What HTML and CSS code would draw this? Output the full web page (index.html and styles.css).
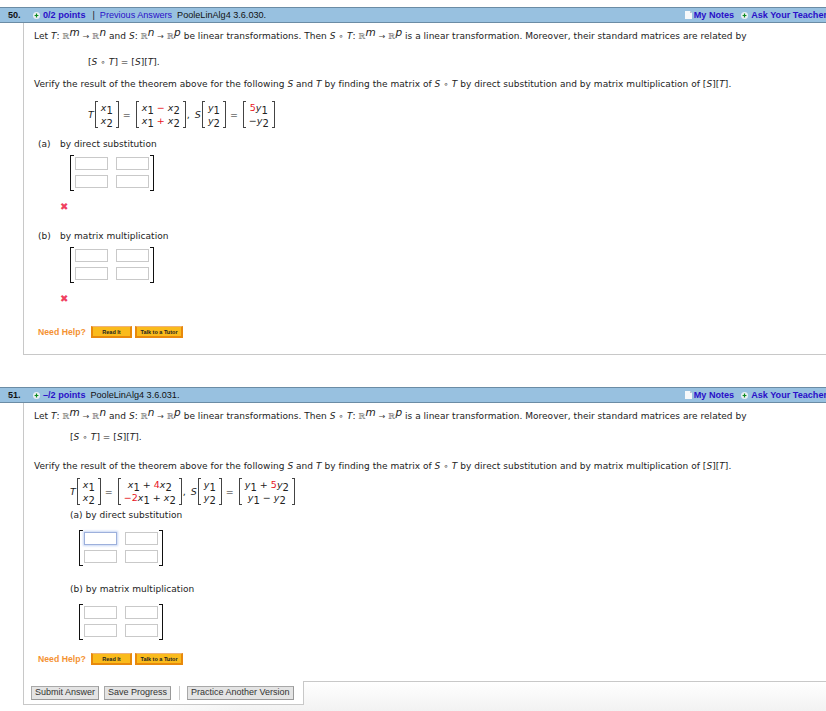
FILE: index.html
```html
<!DOCTYPE html>
<html lang="en">
<head>
<meta charset="utf-8">
<title>Questions</title>
<link rel="stylesheet" href="styles.css">
</head>
<body>
<section class="q q50">
  <header class="qhead">
    <b class="num">50.</b>
    <svg class="plus" viewBox="0 0 7 7"><circle cx="3.5" cy="3.5" r="3.5" fill="#e8eef2"/><path d="M3.5 1.6v3.8M1.6 3.5h3.8" stroke="#0a8a1e" stroke-width="1.2"/></svg>
    <a class="link pts">0/2 points</a>
    <span class="sep">|</span>
    <a class="link prev">Previous Answers</a>
    <span class="code">PooleLinAlg4 3.6.030.</span>
    <span class="tools">
      <svg class="note" viewBox="0 0 7 8"><path d="M0 0h5l2 2v6H0z" fill="#f6f8fa"/><path d="M5 0l2 2H5z" fill="#b8c4cc"/></svg><a class="link">My Notes</a>
      <svg class="plus ask" viewBox="0 0 7 7"><circle cx="3.5" cy="3.5" r="3.5" fill="#e8eef2"/><path d="M3.5 1.6v3.8M1.6 3.5h3.8" stroke="#0a8a1e" stroke-width="1.2"/></svg><a class="link">Ask Your Teacher</a>
    </span>
  </header>
  <div class="body">
    <p class="line l1">Let <i>T</i>: <span class="bb">ℝ</span><sup>m</sup> <span class="arr">→</span> <span class="bb">ℝ</span><sup>n</sup> and <i>S</i>: <span class="bb">ℝ</span><sup>n</sup> <span class="arr">→</span> <span class="bb">ℝ</span><sup>p</sup> be linear transformations. Then <i>S</i> <span class="o">∘</span> <i>T</i>: <span class="bb">ℝ</span><sup>m</sup> <span class="arr">→</span> <span class="bb">ℝ</span><sup>p</sup> is a linear transformation. Moreover, their standard matrices are related by</p>
    <p class="line thm a">[<i>S</i> <span class="o">∘</span> <i>T</i>] = [<i>S</i>][<i>T</i>].</p>
    <p class="line ver a2">Verify the result of the theorem above for the following <i>S</i> and <i>T</i> by finding the matrix of <i>S</i> <span class="o">∘</span> <i>T</i> by direct substitution and by matrix multiplication of [<i>S</i>][<i>T</i>].</p>
    <div class="eq e50">
      <i class="v">T</i>
      <span class="mx"><span class="bl"></span><span class="cells"><span><var>x</var><sub>1</sub></span><span><var>x</var><sub>2</sub></span></span><span class="br"></span></span>
      <span class="eqs">=</span>
      <span class="mx"><span class="bl"></span><span class="cells"><span><var>x</var><sub>1</sub> <em>−</em> <var>x</var><sub>2</sub></span><span><var>x</var><sub>1</sub> <em>+</em> <var>x</var><sub>2</sub></span></span><span class="br"></span></span>
      <span class="comma">,</span>
      <i class="v s">S</i>
      <span class="mx"><span class="bl"></span><span class="cells"><span><var>y</var><sub>1</sub></span><span><var>y</var><sub>2</sub></span></span><span class="br"></span></span>
      <span class="eqs">=</span>
      <span class="mx"><span class="bl"></span><span class="cells"><span><em>5</em><var>y</var><sub>1</sub></span><span>−<var>y</var><sub>2</sub></span></span><span class="br"></span></span>
    </div>
    <p class="line part pa"><span class="tag">(a)</span>by direct substitution</p>
    <div class="grid g50"><span class="bl"></span><span class="inputs"><input><input><input><input></span><span class="br"></span></div>
    <div class="wrong">✖</div>
    <p class="line part pb"><span class="tag">(b)</span>by matrix multiplication</p>
    <div class="grid g50"><span class="bl"></span><span class="inputs"><input><input><input><input></span><span class="br"></span></div>
    <div class="wrong">✖</div>
    <div class="help h50"><span class="need">Need Help?</span><span class="hbtn read">Read It</span><span class="hbtn talk">Talk to a Tutor</span></div>
  </div>
</section>

<section class="q q51">
  <header class="qhead">
    <b class="num">51.</b>
    <svg class="plus" viewBox="0 0 7 7"><circle cx="3.5" cy="3.5" r="3.5" fill="#e8eef2"/><path d="M3.5 1.6v3.8M1.6 3.5h3.8" stroke="#0a8a1e" stroke-width="1.2"/></svg>
    <a class="link pts">–/2 points</a>
    <span class="code c51">PooleLinAlg4 3.6.031.</span>
    <span class="tools">
      <svg class="note" viewBox="0 0 7 8"><path d="M0 0h5l2 2v6H0z" fill="#f6f8fa"/><path d="M5 0l2 2H5z" fill="#b8c4cc"/></svg><a class="link">My Notes</a>
      <svg class="plus ask" viewBox="0 0 7 7"><circle cx="3.5" cy="3.5" r="3.5" fill="#e8eef2"/><path d="M3.5 1.6v3.8M1.6 3.5h3.8" stroke="#0a8a1e" stroke-width="1.2"/></svg><a class="link">Ask Your Teacher</a>
    </span>
  </header>
  <div class="body">
    <p class="line l1">Let <i>T</i>: <span class="bb">ℝ</span><sup>m</sup> <span class="arr">→</span> <span class="bb">ℝ</span><sup>n</sup> and <i>S</i>: <span class="bb">ℝ</span><sup>n</sup> <span class="arr">→</span> <span class="bb">ℝ</span><sup>p</sup> be linear transformations. Then <i>S</i> <span class="o">∘</span> <i>T</i>: <span class="bb">ℝ</span><sup>m</sup> <span class="arr">→</span> <span class="bb">ℝ</span><sup>p</sup> is a linear transformation. Moreover, their standard matrices are related by</p>
    <p class="line thm b">[<i>S</i> <span class="o">∘</span> <i>T</i>] = [<i>S</i>][<i>T</i>].</p>
    <p class="line ver b2">Verify the result of the theorem above for the following <i>S</i> and <i>T</i> by finding the matrix of <i>S</i> <span class="o">∘</span> <i>T</i> by direct substitution and by matrix multiplication of [<i>S</i>][<i>T</i>].</p>
    <div class="eq e51">
      <i class="v">T</i>
      <span class="mx"><span class="bl"></span><span class="cells"><span><var>x</var><sub>1</sub></span><span><var>x</var><sub>2</sub></span></span><span class="br"></span></span>
      <span class="eqs">=</span>
      <span class="mx"><span class="bl"></span><span class="cells"><span><var>x</var><sub>1</sub> + <em>4</em><var>x</var><sub>2</sub></span><span><em>−2</em><var>x</var><sub>1</sub> + <var>x</var><sub>2</sub></span></span><span class="br"></span></span>
      <span class="comma">,</span>
      <i class="v s">S</i>
      <span class="mx"><span class="bl"></span><span class="cells"><span><var>y</var><sub>1</sub></span><span><var>y</var><sub>2</sub></span></span><span class="br"></span></span>
      <span class="eqs">=</span>
      <span class="mx"><span class="bl"></span><span class="cells"><span><var>y</var><sub>1</sub> + <em>5</em><var>y</var><sub>2</sub></span><span><var>y</var><sub>1</sub> − <var>y</var><sub>2</sub></span></span><span class="br"></span></span>
    </div>
    <p class="line part2">(a) by direct substitution</p>
    <div class="grid g51"><span class="bl"></span><span class="inputs"><input class="focus"><input><input><input></span><span class="br"></span></div>
    <p class="line part2 p2b">(b) by matrix multiplication</p>
    <div class="grid g51"><span class="bl"></span><span class="inputs"><input><input><input><input></span><span class="br"></span></div>
    <div class="help h51"><span class="need">Need Help?</span><span class="hbtn read">Read It</span><span class="hbtn talk">Talk to a Tutor</span></div>
    <div class="actions">
      <div class="btns">
        <button>Submit Answer</button>
        <button>Save Progress</button>
        <span class="divider"></span>
        <button>Practice Another Version</button>
      </div>
      <div class="rest"></div>
    </div>
  </div>
</section>
</body>
</html>
```
FILE: styles.css
```css
* { box-sizing: border-box; }
html, body { margin: 0; padding: 0; background: #fff; }
body {
  width: 826px;
  height: 711px;
  overflow: hidden;
  font-family: "DejaVu Sans", Verdana, sans-serif;
  font-size: 9px;
  color: #222;
}
.q50 { padding-top: 7px; height: 380px; }
.q51 { padding-top: 7px; }
.qhead {
  display: flex;
  align-items: center;
  height: 16px;
  background: #98c1e0;
  border-top: 1px solid #6b8ca5;
  border-bottom: 1px solid #6b8ca5;
  font-family: "Liberation Sans", Arial, sans-serif;
  font-size: 9.1px;
  color: #111;
  white-space: nowrap;
}
.num { width: 33px; padding-left: 8px; flex: none; }
.plus { width: 7px; height: 7px; flex: none; margin-right: 3px; }
.link { color: #2a10c8; }
.pts { font-weight: 700; }
.sep { margin: 0 5px 0 7px; color: #222; }
.prev { margin-right: 5px; }
.code { color: #111; }
.c51 { margin-left: 5px; }
.tools {
  margin-left: auto;
  margin-right: -1px;
  display: flex;
  align-items: center;
  flex: none;
  font-weight: 700;
}
.note { width: 7px; height: 8px; margin-right: 2px; flex: none; }
.plus.ask { margin-left: 7px; margin-right: 3px; }
.body {
  margin-left: 23px;
  border-left: 1px solid #c8c8c8;
  border-bottom: 1px solid #c8c8c8;
  padding-left: 10px;
}
.q50 .body { height: 332px; }
.q51 .body { height: 302px; position: relative; border-bottom: 0; }
.line { margin: 0; line-height: 14px; white-space: nowrap; letter-spacing: .04px; }
.l1 { padding-top: 6px; height: 20px; letter-spacing: .03px; }
i { font-family: "DejaVu Sans", sans-serif; font-style: oblique; }
.bb { font-family: "DejaVu Serif", serif; color: #777; font-size: 8.5px; }
.arr { font-size: 8px; color: #444; }
.o { color: #444; }
sup { font-size: 10.5px; font-family: "DejaVu Sans", sans-serif; font-style: oblique; line-height: 0; vertical-align: 3px; }
.thm.a { margin-top: 12px; margin-left: 54px; }
.thm.b { margin-top: 7px; margin-left: 36px; }
.a2 { margin-top: 8px; }
.b2 { margin-top: 15px; }
.eq { display: flex; align-items: center; height: 28px; white-space: nowrap; font-size: 9.5px; }
.e50 { margin-left: 54px; margin-top: 9px; }
.e51 { margin-left: 36px; margin-top: 4px; }
.mx { display: inline-flex; height: 27px; align-items: stretch; margin-left: 1px; }
.mx .bl, .mx .br { width: 3px; border: 1px solid #444; flex: none; }
.bl { border-right: 0 !important; }
.br { border-left: 0 !important; }
.cells { display: flex; flex-direction: column; justify-content: space-around; align-items: center; padding: 0 3px; line-height: 13px; }
var { font-family: "DejaVu Sans", sans-serif; font-style: oblique; }
sub { font-size: 10px; line-height: 0; vertical-align: -3px; }
em { font-style: normal; color: #e8141c; }
.eqs { margin: 0 4px; }
.comma { margin: 0 5px 0 1px; }
.part { display: flex; margin-left: 4px; }
.tag { width: 22px; }
.pa { margin-top: 9px; }
.pb { margin-top: 16px; }
.grid { display: flex; align-items: stretch; height: 36px; }
.g50 { margin-left: 36px; margin-top: 4px; width: 85px; }
.g51 { margin-left: 45px; margin-top: 8px; width: 84px; }
.grid .bl, .grid .br { width: 4px; border: 1px solid #111; flex: none; }
.inputs {
  display: grid;
  grid-template-columns: 33px 33px;
  grid-auto-rows: 13px;
  column-gap: 8px;
  row-gap: 5px;
  padding: 2px 1px;
  flex: none;
}
input {
  width: 33px; height: 13px;
  margin: 0; padding: 0;
  border: 1px solid #c9c9c9;
  background: #fff;
  border-radius: 0;
}
.focus { border-color: #9db0dc; box-shadow: 0 0 2px 1px #c8d6f4; }
.wrong { color: #f0405f; font-size: 10px; line-height: 12px; margin: 10px 0 0 26px; height: 12px; }
.part2 { margin-left: 36px; margin-top: 3px; }
.part2.p2b { margin-top: 16px; }
.help { display: flex; align-items: center; height: 12px; }
.h50 { margin: 21px 0 0 4px; }
.h51 { margin: 13px 0 0 4px; }
.need {
  color: #f49232;
  font-family: "Liberation Sans", Arial, sans-serif;
  font-weight: 700;
  font-size: 8.7px;
  width: 53px;
}
.hbtn {
  display: flex; align-items: center; justify-content: center;
  height: 12px;
  background: #fabb1c;
  border: 2px solid #e8890c;
  border-top: 1px solid #eeb27a;
  font-family: "Liberation Sans", Arial, sans-serif;
  font-weight: 700;
  font-size: 5.5px;
  color: #222;
}
.read { width: 41px; margin-right: 3px; }
.talk { width: 48px; }
.actions {
  display: flex;
  position: absolute;
  left: 0; right: 0; top: 278px;
  height: 30px;
  background: linear-gradient(to right, #fff 100px, transparent 220px), linear-gradient(#fff, #f2f2f2);
}
.btns {
  width: 280px; height: 24px;
  display: flex; align-items: center; gap: 5px;
  padding-left: 7px;
  background: #fff;
  border-right: 1px solid #c8c8c8;
  border-bottom: 1px solid #c8c8c8;
  flex: none;
}
button {
  height: 14px;
  padding: 0 3px;
  border: 1px solid #a8a8a8;
  border-right-color: #999;
  border-bottom-color: #999;
  background: #e4e4e4;
  border-radius: 0;
  font-family: "Liberation Sans", Arial, sans-serif;
  font-size: 9px;
  line-height: 11px;
  color: #333;
  white-space: nowrap;
}
.divider { width: 1px; height: 14px; background: #ccc; margin: 0 2px 0 3px; }
.rest { flex: 1; height: 30px; border-top: 1px solid #c8c8c8; }
```
